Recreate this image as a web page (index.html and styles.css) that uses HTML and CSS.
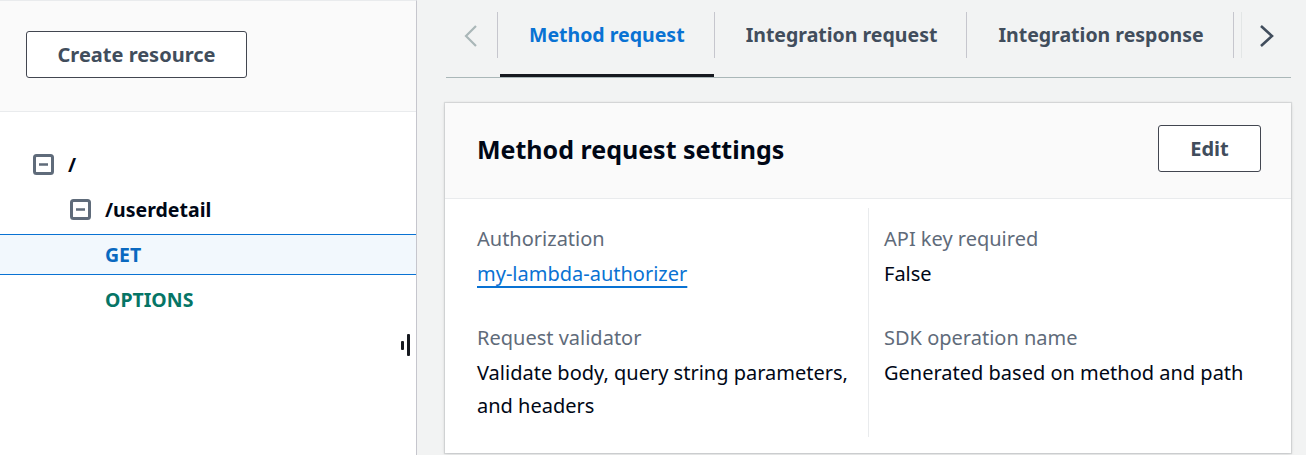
FILE: index.html
```html
<!DOCTYPE html>
<html lang="en">
<head>
<meta charset="utf-8">
<title>Method request</title>
<link rel="stylesheet" href="styles.css">
</head>
<body>
<div class="app">
  <aside class="side">
    <div class="side-top">
      <button class="btn btn-create">Create resource</button>
    </div>
    <ul class="tree">
      <li class="row lvl0">
        <span class="toggle"><svg width="21" height="21" viewBox="0 0 21 21"><rect x="1.5" y="1.5" width="18" height="18" rx="2" fill="none" stroke="#5f6b7a" stroke-width="3"/><rect x="6" y="9.25" width="9" height="2.5" fill="#5f6b7a"/></svg></span>
        <span class="path">/</span>
      </li>
      <li class="row lvl1">
        <span class="toggle"><svg width="21" height="21" viewBox="0 0 21 21"><rect x="1.5" y="1.5" width="18" height="18" rx="2" fill="none" stroke="#5f6b7a" stroke-width="3"/><rect x="6" y="9.25" width="9" height="2.5" fill="#5f6b7a"/></svg></span>
        <span class="path">/userdetail</span>
      </li>
      <li class="row lvl2 selected"><span class="method get">GET</span></li>
      <li class="row lvl2"><span class="method options">OPTIONS</span></li>
    </ul>
    <span class="resizer"><span class="bar short"></span><span class="bar long"></span></span>
  </aside>
  <main class="main">
    <div class="tabs">
      <button class="tab-arrow prev" aria-label="Previous"><svg width="16" height="24" viewBox="0 0 16 24"><path d="M13 2 L3 12 L13 22" fill="none" stroke="#aab7b8" stroke-width="2.2"/></svg></button>
      <div class="tab-list">
        <div class="tab active"><span class="tab-label">Method request</span></div>
        <div class="tab"><span class="tab-label">Integration request</span></div>
        <div class="tab last"><span class="tab-label">Integration response</span></div>
      </div>
      <button class="tab-arrow next" aria-label="Next"><svg width="16" height="24" viewBox="0 0 16 24"><path d="M2 2 L13 12 L2 22" fill="none" stroke="#414d5c" stroke-width="2.6"/></svg></button>
    </div>
    <section class="card">
      <header class="card-head">
        <h2 class="card-title">Method request settings</h2>
        <button class="btn btn-edit">Edit</button>
      </header>
      <div class="card-body">
        <div class="col">
          <div class="kv">
            <div class="key">Authorization</div>
            <div class="val"><a class="link" href="#">my-lambda-authorizer</a></div>
          </div>
          <div class="kv">
            <div class="key">Request validator</div>
            <div class="val">Validate body, query string parameters, and headers</div>
          </div>
        </div>
        <div class="col col-right">
          <div class="kv">
            <div class="key">API key required</div>
            <div class="val">False</div>
          </div>
          <div class="kv">
            <div class="key">SDK operation name</div>
            <div class="val">Generated based on method and path</div>
          </div>
        </div>
      </div>
    </section>
  </main>
</div>
</body>
</html>
```
FILE: styles.css
```css
* { box-sizing: border-box; }
html, body { margin: 0; padding: 0; }
body {
  width: 1306px;
  height: 455px;
  overflow: hidden;
  font-family: "Noto Sans", "Open Sans", Arial, sans-serif;
  font-size: 20px;
  color: #000716;
  background: #f2f3f3;
}
.app { display: flex; height: 455px; }

/* sidebar */
.side {
  position: relative;
  width: 417px;
  flex: none;
  background: #fff;
  border-right: 1px solid #c6c6cd;
  border-top: 1px solid #e9ebed;
}
.side-top {
  height: 111px;
  background: #fafafa;
  border-bottom: 1px solid #e9ebed;
  padding: 30px 0 0 26px;
}
.btn {
  font-family: inherit;
  font-weight: 700;
  font-size: 20px;
  color: #414d5c;
  background: #fff;
  border: 1px solid #424650;
  border-radius: 3px;
  cursor: pointer;
}
.btn-create { width: 221px; height: 47px; }
.tree { list-style: none; margin: 0; padding: 32px 0 0 0; font-size: 19.5px; }
.row {
  display: flex;
  align-items: center;
  height: 41px;
  margin-bottom: 4px;
  font-weight: 700;
}
.row.lvl0 { padding-left: 33px; }
.row.lvl1 { padding-left: 70px; }
.row.lvl2 { padding-left: 105px; }
.toggle { display: flex; width: 21px; height: 21px; margin-right: 14px; }
.path { color: #000716; }
.row.selected {
  background: #f2f8fd;
  border-top: 1px solid #0972d3;
  border-bottom: 1px solid #0972d3;
}
.method.get { color: #0a69c0; }
.method.options { color: #067566; }
.resizer {
  position: absolute;
  left: 401px;
  top: 333px;
  display: flex;
  align-items: center;
  gap: 3px;
  height: 22px;
}
.bar { display: block; background: #16191f; border-radius: 1px; }
.bar.short { width: 3px; height: 9px; }
.bar.long { width: 3px; height: 22px; }

/* main */
.main {
  flex: 1;
  padding: 0 15px 0 28px;
}
.tabs {
  display: flex;
  height: 78px;
  border-bottom: 1px solid #aab7b8;
  margin-left: 1px;
}
.tab-arrow {
  background: none;
  border: 0;
  padding: 0;
  width: 51px;
  height: 77px;
  display: flex;
  align-items: center;
  justify-content: flex-start;
  padding-bottom: 6px;
}
.tab-arrow.prev { padding-left: 17px; }
.tab-arrow.next { width: 54px; padding-left: 24px; }
.tab-list { display: flex; }
.tab {
  position: relative;
  padding-top: 12px;
  height: 77px;
  font-weight: 700;
  font-size: 19.5px;
  color: #414d5c;
}
.tab-label {
  display: block;
  height: 46px;
  line-height: 46px;
  padding: 0 29px 0 31px;
  border-left: 1px solid #c6c6cd;
  white-space: nowrap;
}
.tab.last .tab-label { padding-right: 31px; }
.tab.last::after {
  content: "";
  position: absolute;
  right: -7px;
  top: 12px;
  width: 7px;
  height: 46px;
  border-left: 1px solid #c6c6cd;
  border-right: 1px solid #e3e6e6;
}
.tab.active { color: #0972d3; }
.tab.active::after {
  content: "";
  position: absolute;
  left: 3px;
  right: 0;
  bottom: 0;
  height: 3px;
  background: #16191f;
}

/* card */
.card {
  margin-top: 25px;
  background: #fff;
  box-shadow: 0 0 1px 1px rgba(0, 7, 22, 0.1), 0 1px 4px rgba(0, 7, 22, 0.1);
}
.card-head {
  display: flex;
  align-items: center;
  justify-content: space-between;
  height: 96px;
  padding: 0 30px 4px 32px;
  background: #fafafa;
  border-bottom: 1px solid #e9ebed;
}
.card-title {
  margin: 0;
  font-size: 25px;
  font-weight: 700;
  color: #000716;
}
.btn-edit { width: 103px; height: 47px; }
.card-body {
  display: grid;
  grid-template-columns: 391px 1fr;
  padding: 9px 30px 16px 32px;
}
.col { padding: 14px 12px 15px 0; }
.col-right { border-left: 1px solid #e9ebed; padding-left: 15px; }
.kv + .kv { margin-top: 31px; }
.key { line-height: 33px; color: #5f6b7a; margin-bottom: 2px; }
.val { line-height: 33px; color: #000716; }
.link {
  color: #0972d3;
  text-decoration: underline;
  text-decoration-thickness: 2px;
  text-underline-offset: 5px;
}
```
